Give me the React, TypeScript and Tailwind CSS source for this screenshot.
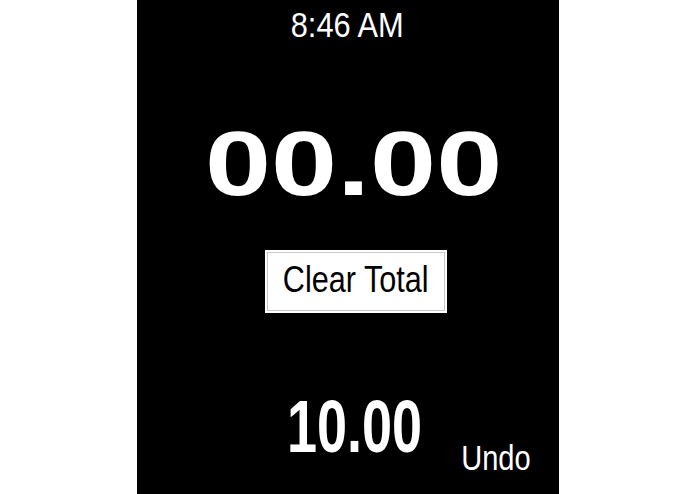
export default function App() {
  return (
    <div className="flex h-[494px] w-full justify-center bg-white">
      {/* Watch screen */}
      <div className="flex h-full w-[422px] flex-col items-center bg-black text-white font-['Liberation_Sans',sans-serif]">
        <div className="mt-[7px] inline-block scale-x-[0.88] text-[35px] leading-none">8:46 AM</div>

        <div className="ml-[12px] mt-[77px] inline-block scale-x-[1.32] text-[90px] font-bold leading-none">00.00</div>

        <div className="ml-[16px] mt-[41px] h-[63px] w-[182px] bg-white p-[2px]">
          <div className="flex h-full w-full items-center justify-center border border-[#c8c8c8] pb-[3px] text-black">
            <span className="inline-block scale-x-[0.85] text-[36px] leading-none">Clear Total</span>
          </div>
        </div>

        <div className="mt-[76px] flex w-full items-start">
          <div className="ml-[150px] w-[140px] shrink-0 origin-left scale-x-[0.72] whitespace-nowrap text-[75px] font-bold leading-none">10.00</div>
          <div className="ml-auto mr-[28px] mt-[51px] inline-block shrink-0 origin-right scale-x-[0.83] text-[35px] leading-none">Undo</div>
        </div>
      </div>
    </div>
  );
}
